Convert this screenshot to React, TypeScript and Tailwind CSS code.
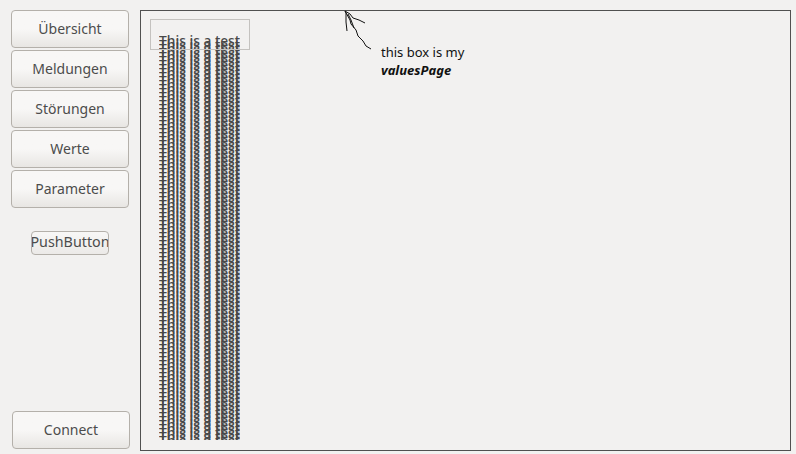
import React from 'react';

const navItems = ['Übersicht', 'Meldungen', 'Störungen', 'Werte', 'Parameter'];
const testLines = Array.from({ length: 102 });

const NavButton = ({ label, className = '' }: { label: string; className?: string }) => (
  <button
    className={`flex h-[38px] w-[118px] items-center justify-center rounded-[4px] border border-[#b4b0aa] bg-gradient-to-b from-[#f8f7f6] from-50% to-[#e8e6e3] pb-[2px] text-[14px] text-[#4c4c4c] ${className}`}
  >
    {label}
  </button>
);

export default function App() {
  return (
    <div className="flex h-[454px] w-[796px] overflow-hidden bg-[#f2f1f0] font-['Noto_Sans','Open_Sans',sans-serif]">
      {/* Linke Spalte */}
      <div className="flex w-[140px] shrink-0 flex-col pb-[5px] pl-[11px] pt-[10px]">
        <div className="flex flex-col gap-[2px]">
          {navItems.map((item) => (
            <NavButton key={item} label={item} />
          ))}
        </div>
        <button className="ml-[20px] mt-[23px] flex h-[24px] w-[78px] items-center justify-center overflow-hidden whitespace-nowrap rounded-[4px] border border-[#b4b0aa] bg-gradient-to-b from-[#f8f7f6] to-[#eceae8] pb-[2px] text-[14.3px] text-[#4c4c4c]">
          PushButton
        </button>
        <NavButton label="Connect" className="ml-[1px] mt-auto" />
      </div>

      {/* valuesPage */}
      <div className="relative mb-[3px] mt-[10px] h-[441px] w-[651px] border border-[#505050]">
        <div className="absolute left-[9px] top-[8px] h-[31px] w-[100px] border border-[#c4c2bf]" />
        <div className="ml-[18px] mt-[20px] h-[409px] w-[81px] overflow-hidden">
          {testLines.map((_, i) => (
            <div key={i} className="h-[4px] whitespace-nowrap text-[13.8px] font-medium leading-[19px] text-[#484848]">
              This is a test
            </div>
          ))}
        </div>

        {/* Pfeil */}
        <svg className="absolute left-[200px] top-[-3px]" width="36" height="42" viewBox="0 0 36 42" fill="none" stroke="#111" strokeWidth="1">
          <path d="M4 3 L5 5 L5 14 L6 23" />
          <path d="M4 3 L9 12 L10 16 L15 22 L17 28 L22 33 L25 38 L30 41" />
          <path d="M4 3 L9 6 L12 10 L18 12 L24 15" />
          <path d="M7 6 L10 12 L13 20" />
        </svg>

        <div className="absolute left-[240px] top-[32px] text-[13px] leading-[18px] text-[#111]">
          <div>this box is my</div>
          <div className="font-bold italic">valuesPage</div>
        </div>
      </div>
    </div>
  );
}
